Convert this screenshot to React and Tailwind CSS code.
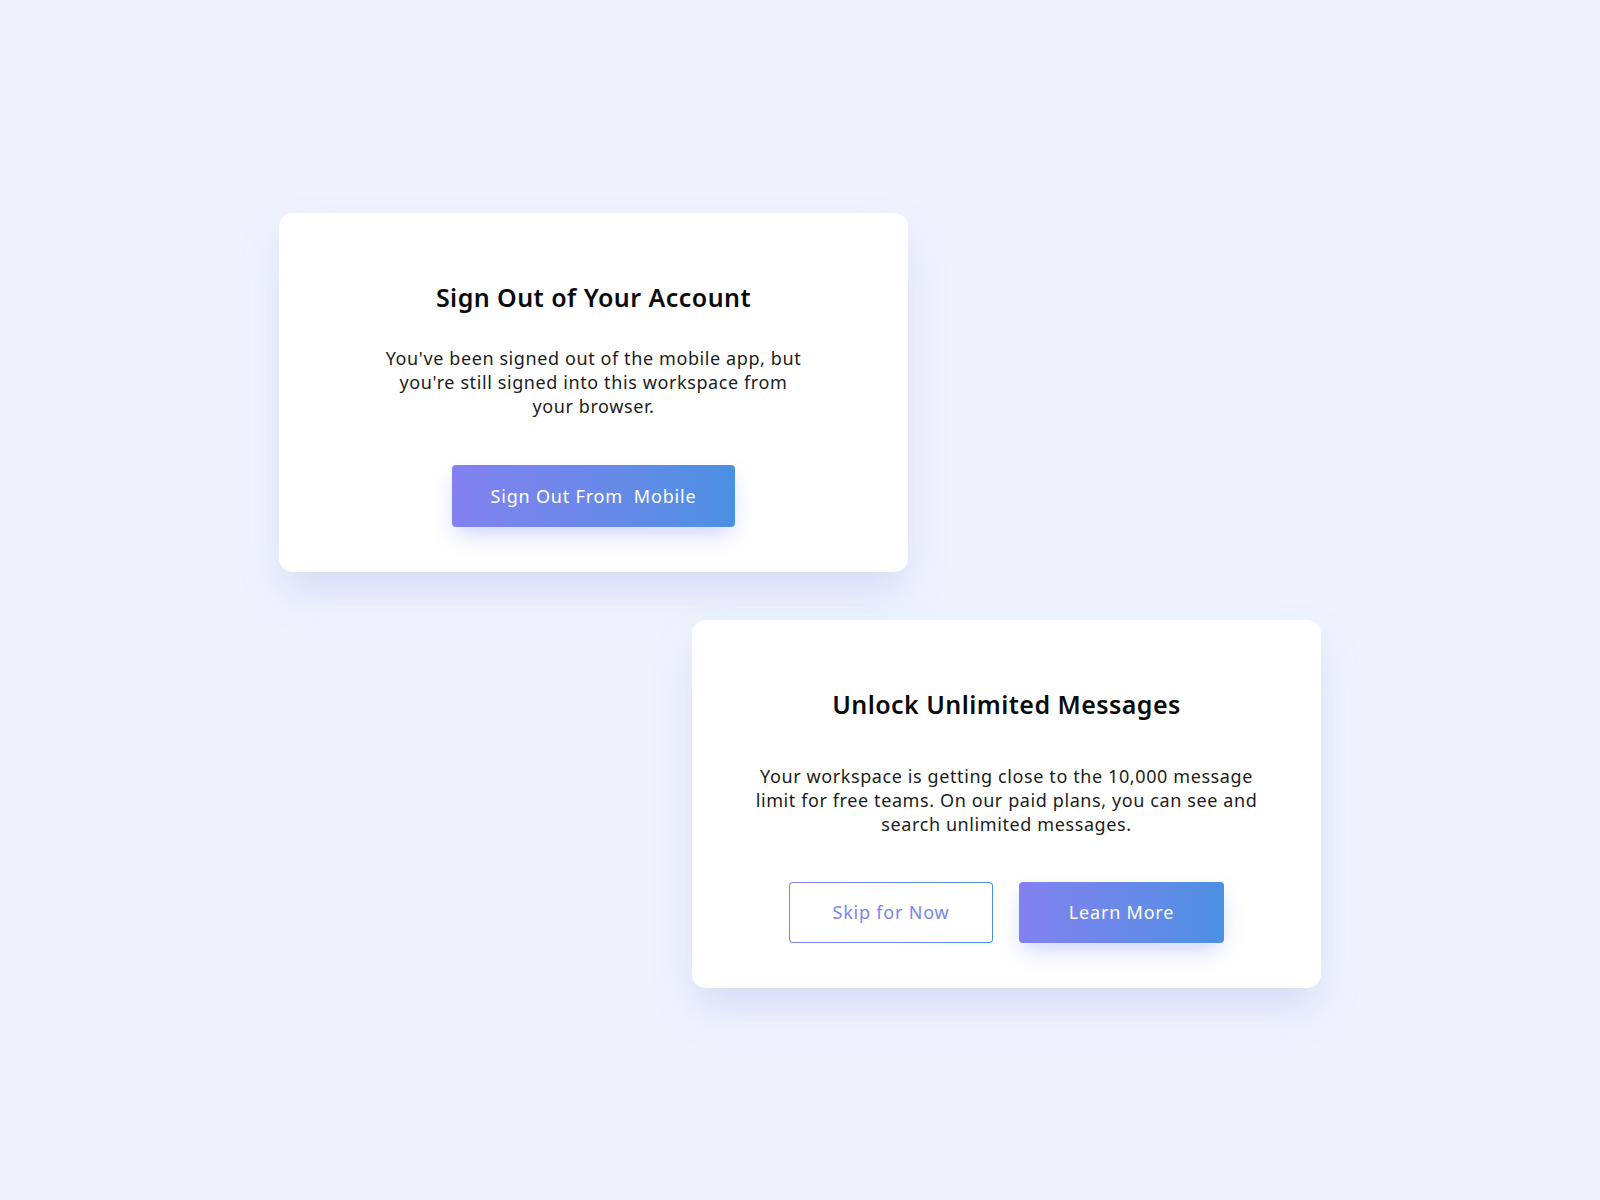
import React from 'react'

const font = { fontFamily: '"Noto Sans", "Open Sans", "Liberation Sans", sans-serif' }

function Card({ title, text, textWidth, titleGap, children, className = '' }) {
  return (
    <div
      className={`flex w-[629px] flex-col items-center rounded-[14px] bg-white px-10 pt-[68px] pb-[45px] text-center shadow-[0_22px_40px_-6px_rgba(160,175,225,0.35)] ${className}`}
    >
      <h2 className="text-[25px] leading-[32px] font-semibold tracking-[0.45px] text-[#0b0b0b]">{title}</h2>
      <p className={`${textWidth} ${titleGap} text-[18px] leading-[24px] tracking-[0.6px] text-[#1c1c1c]`}>{text}</p>
      {children}
    </div>
  )
}

export default function App() {
  return (
    <div className="min-h-[1200px] bg-[#eef3fe] pt-[213px] pl-[279px]" style={font}>
      <Card
        title="Sign Out of Your Account"
        text="You've been signed out of the mobile app, but you're still signed into this workspace from your browser."
        textWidth="max-w-[428px]"
        titleGap="mt-[33px]"
      >
        <button className="mt-[47px] h-[62px] w-[283px] rounded-[4px] bg-gradient-to-r from-[#8281f0] to-[#4a90e2] text-[18px] tracking-[0.8px] whitespace-pre text-white shadow-[0_10px_22px_-4px_rgba(110,125,235,0.35)]">
          {'Sign Out From  Mobile'}
        </button>
      </Card>

      <Card
        className="mt-[48px] ml-[413px]"
        title="Unlock Unlimited Messages"
        text="Your workspace is getting close to the 10,000 message limit for free teams. On our paid plans, you can see and search unlimited messages."
        textWidth="max-w-[508px]"
        titleGap="mt-[44px]"
      >
        <div className="mt-[46px] flex gap-[26px]">
          <div className="rounded-[4px] bg-gradient-to-r from-[#8281f0] to-[#4a90e2] p-px">
            <button className="h-[59px] w-[202px] rounded-[3px] bg-white text-[18px] tracking-[0.8px] text-[#7b85ec]">
              Skip for Now
            </button>
          </div>
          <button className="h-[61px] w-[205px] rounded-[4px] bg-gradient-to-r from-[#8281f0] to-[#4a90e2] text-[18px] tracking-[0.8px] text-white shadow-[0_10px_22px_-4px_rgba(110,125,235,0.35)]">
            Learn More
          </button>
        </div>
      </Card>
    </div>
  )
}
